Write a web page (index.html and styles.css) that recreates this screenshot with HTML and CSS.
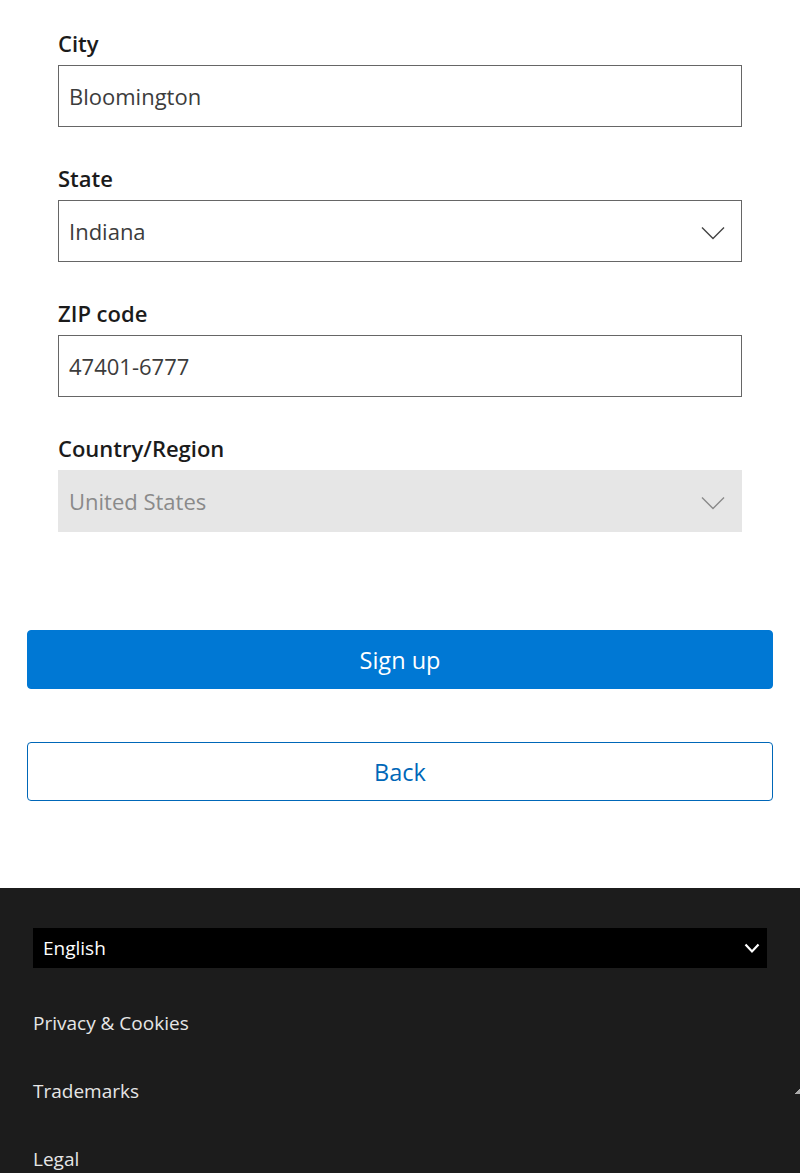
FILE: index.html
```html
<!DOCTYPE html>
<html lang="en">
<head>
<meta charset="utf-8">
<title>Sign up</title>
<link rel="stylesheet" href="styles.css">
</head>
<body>
<main class="form">
  <div class="field">
    <label class="label">City</label>
    <div class="input">Bloomington</div>
  </div>
  <div class="field">
    <label class="label">State</label>
    <div class="input select">
      <span>Indiana</span>
      <svg class="chev" width="24" height="14" viewBox="0 0 24 14"><path d="M1 1.5 L12 12.5 L23 1.5" fill="none" stroke="#444" stroke-width="1.4"/></svg>
    </div>
  </div>
  <div class="field">
    <label class="label">ZIP code</label>
    <div class="input">47401-6777</div>
  </div>
  <div class="field">
    <label class="label">Country/Region</label>
    <div class="input select disabled">
      <span>United States</span>
      <svg class="chev" width="24" height="14" viewBox="0 0 24 14"><path d="M1 1.5 L12 12.5 L23 1.5" fill="none" stroke="#8a8a8a" stroke-width="1.4"/></svg>
    </div>
  </div>
</main>
<div class="actions">
  <button class="btn primary">Sign up</button>
  <button class="btn secondary">Back</button>
</div>
<footer class="footer">
  <div class="lang">
    <span>English</span>
    <svg width="16" height="11" viewBox="0 0 16 11"><path d="M1.5 1.5 L8 8.5 L14.5 1.5" fill="none" stroke="#fff" stroke-width="2.2"/></svg>
  </div>
  <a class="link" href="#">Privacy &amp; Cookies</a>
  <a class="link" href="#">Trademarks</a>
  <a class="link" href="#">Legal</a>
  <span class="corner"></span>
</footer>
</body>
</html>
```

FILE: styles.css
```css
* { box-sizing: border-box; }
html, body { margin: 0; padding: 0; background: #fff; }
body { font-family: "Open Sans", "Noto Sans", sans-serif; color: #1b1b1b; }

.form { padding: 28px 58px 0; }
.field { margin-bottom: 36px; }
.field:last-child { margin-bottom: 0; }
.label {
  display: block;
  font-size: 22px;
  font-weight: 600;
  line-height: 30px;
  margin-bottom: 7px;
  color: #1b1b1b;
}
.input {
  height: 62px;
  border: 1px solid #666;
  padding: 0 10px;
  display: flex;
  align-items: center;
  font-size: 22px;
  color: #3c3c3c;
  background: #fff;
}
.select { justify-content: space-between; padding-right: 16px; }
.chev { margin-top: 4px; }
.disabled { background: #e6e6e6; border-color: #e6e6e6; color: #8a8a8a; }

.actions {
  padding: 98px 27px 87px;
  display: flex;
  flex-direction: column;
  gap: 53px;
}
.btn {
  height: 59px;
  border-radius: 4px;
  font-family: inherit;
  font-size: 23.5px;
  cursor: pointer;
}
.primary { background: #0078d4; border: 1px solid #0078d4; color: #fff; }
.secondary { background: #fff; border: 1px solid #0067b8; color: #0067b8; }

.footer {
  position: relative;
  background: #1c1c1c;
  padding: 40px 33px 0;
  display: flex;
  flex-direction: column;
}
.lang {
  height: 40px;
  background: #000;
  color: #fff;
  font-size: 19px;
  display: flex;
  align-items: center;
  justify-content: space-between;
  padding: 0 7px 0 10px;
  margin-bottom: 41px;
}
.link {
  color: #e6e6e6;
  text-decoration: none;
  font-size: 19px;
  line-height: 28px;
  margin-bottom: 40px;
  align-self: flex-start;
}
.link:last-of-type { margin-bottom: 0; }
.corner {
  position: absolute;
  right: 0;
  top: 200px;
  width: 6px;
  height: 6px;
  background: linear-gradient(135deg, #1c1c1c 50%, #aaa 50%);
}
```
